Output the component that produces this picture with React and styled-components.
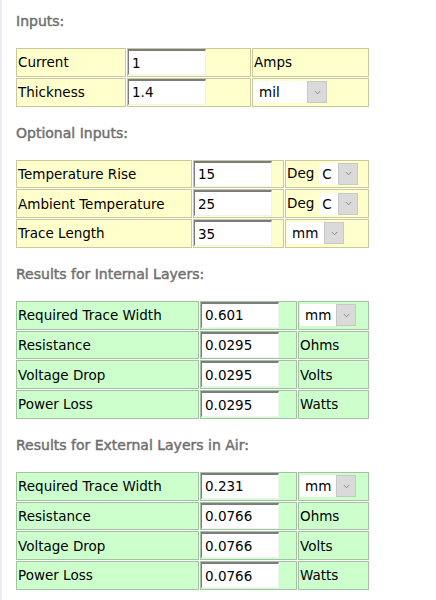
import React from 'react';
import styled, { createGlobalStyle } from 'styled-components';

const GlobalStyle = createGlobalStyle`
  * { box-sizing: border-box; }
  html, body { margin: 0; padding: 0; background: #fff; }
  body {
    font-family: "DejaVu Sans", Verdana, sans-serif;
    font-size: 13.5px;
    color: #000;
  }
`;

const tones = {
  yellow: { bg: '#ffffcc', line: '#c9c99d' },
  green: { bg: '#ccffcc', line: '#a2c2a2' },
};

const Page = styled.div`
  min-height: 600px;
  border-left: 2px solid #e9ebf5;
  padding: 11px 0 0 13px;
`;

const Heading = styled.div`
  padding-left: 1px;
  line-height: 20px;
  font-size: 14px;
  color: #6f6f6f;
  -webkit-text-stroke: 0.45px #6f6f6f;
  margin-bottom: 16px;
`;

const Grid = styled.table`
  border-collapse: separate;
  border-spacing: 1px;
  table-layout: fixed;
  width: 355px;
  margin-bottom: 15px;
`;

const Cell = styled.td`
  height: 28.75px;
  padding: 0 0 0 1px;
  border: 1px solid ${(p) => tones[p.$tone].line};
  background: ${(p) => tones[p.$tone].bg};
  vertical-align: ${(p) => (p.$top ? 'top' : 'middle')};
  white-space: nowrap;
  overflow: hidden;
`;

const FieldCell = styled(Cell)`
  padding: 0;
`;

const Field = styled.input`
  display: block;
  width: 78px;
  height: 26px;
  margin: 0;
  padding: 0 0 0 3px;
  border: 1px solid;
  border-color: #7c7c7c #f2f2f2 #f2f2f2 #7c7c7c;
  border-top-width: 2px;
  background: #fff;
  font: inherit;
  color: #000;
  outline: none;
`;

const SelectBox = styled.span`
  display: inline-flex;
  align-items: center;
  justify-content: space-between;
  vertical-align: middle;
  width: ${(p) => p.$w}px;
  height: 22px;
  margin-left: ${(p) => p.$gap || 0}px;
  padding-left: ${(p) => p.$pad}px;
  background: #fff;
`;

const ArrowBox = styled.span`
  display: flex;
  align-items: center;
  justify-content: center;
  width: 20px;
  height: 22px;
  background: #dadada;
  border: 1px solid #c8c8c8;
`;

const Chevron = () => (
  <svg width="7" height="5" viewBox="0 0 7 5">
    <path d="M0.8 1 L3.5 3.8 L6.2 1" fill="none" stroke="#8c8c8c" strokeWidth="1" />
  </svg>
);

const Select = ({ value, w, pad = 5, gap }) => (
  <SelectBox $w={w} $pad={pad} $gap={gap}>
    <span>{value}</span>
    <ArrowBox>
      <Chevron />
    </ArrowBox>
  </SelectBox>
);

const sections = [
  {
    title: 'Inputs:',
    tone: 'yellow',
    cols: [110, 124, 117],
    rows: [
      ['Current', '1', { text: 'Amps' }],
      ['Thickness', '1.4', { select: 'mil', w: 73 }],
    ],
  },
  {
    title: 'Optional Inputs:',
    tone: 'yellow',
    cols: [176, 91, 84],
    rows: [
      ['Temperature Rise', '15', { text: 'Deg', select: 'C', w: 39, pad: 3, gap: 5 }],
      ['Ambient Temperature', '25', { text: 'Deg', select: 'C', w: 39, pad: 3, gap: 5 }],
      ['Trace Length', '35', { select: 'mm', w: 57 }],
    ],
  },
  {
    title: 'Results for Internal Layers:',
    tone: 'green',
    cols: [183, 97, 71],
    rows: [
      ['Required Trace Width', '0.601', { select: 'mm', w: 56 }],
      ['Resistance', '0.0295', { text: 'Ohms' }],
      ['Voltage Drop', '0.0295', { text: 'Volts' }],
      ['Power Loss', '0.0295', { text: 'Watts' }],
    ],
  },
  {
    title: 'Results for External Layers in Air:',
    tone: 'green',
    cols: [183, 97, 71],
    rows: [
      ['Required Trace Width', '0.231', { select: 'mm', w: 56 }],
      ['Resistance', '0.0766', { text: 'Ohms' }],
      ['Voltage Drop', '0.0766', { text: 'Volts' }],
      ['Power Loss', '0.0766', { text: 'Watts' }],
    ],
  },
];

const UnitCell = ({ unit, tone }) => (
  <Cell $tone={tone}>
    {unit.text}
    {unit.select && <Select value={unit.select} w={unit.w} pad={unit.pad} gap={unit.gap} />}
  </Cell>
);

const Section = ({ title, tone, cols, rows }) => (
  <>
    <Heading>{title}</Heading>
    <Grid>
      <colgroup>
        {cols.map((c, i) => (
          <col key={i} style={{ width: c }} />
        ))}
      </colgroup>
      <tbody>
        {rows.map(([label, value, unit]) => (
          <tr key={label}>
            <Cell $tone={tone}>{label}</Cell>
            <FieldCell $tone={tone} $top>
              <Field defaultValue={value} />
            </FieldCell>
            <UnitCell unit={unit} tone={tone} />
          </tr>
        ))}
      </tbody>
    </Grid>
  </>
);

export default function App() {
  return (
    <>
      <GlobalStyle />
      <Page>
        {sections.map((s) => (
          <Section key={s.title} {...s} />
        ))}
      </Page>
    </>
  );
}
